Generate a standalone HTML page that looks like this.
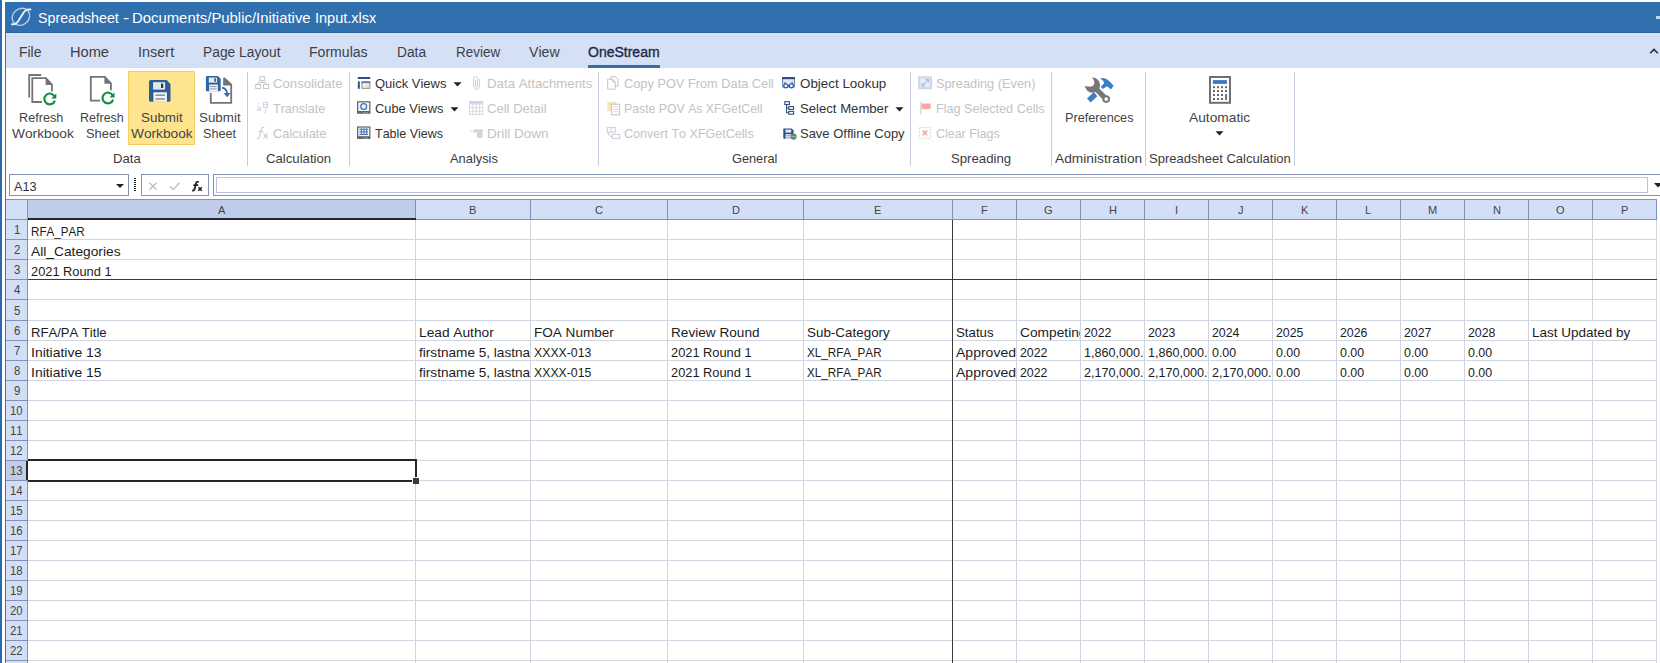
<!DOCTYPE html>
<html><head><meta charset="utf-8"><title>Spreadsheet</title>
<style>
html,body{margin:0;padding:0;background:#fff;}
body{width:1660px;height:663px;position:relative;overflow:hidden;font-family:"Liberation Sans",sans-serif;font-kerning:none;}
body div,body svg{position:absolute;}
</style></head><body>
<div style="left:0px;top:0px;width:2px;height:663px;background:#2b6cb0;"></div>
<div style="left:5px;top:2px;width:1655px;height:31px;background:#3170ae;"></div>
<div style="left:5px;top:33px;width:1px;height:630px;background:#3b76b5;"></div>
<div style="left:6px;top:33px;width:1654px;height:35px;background:#d4e0f6;"></div>
<div style="left:5px;top:32px;width:1655px;height:1px;background:#2b629e;"></div>
<div style="left:6px;top:33px;width:1654px;height:1px;background:#cfe2fb;"></div>
<div style="left:6px;top:36px;width:1654px;height:2px;background:#d6ddf1;"></div>
<div style="left:37.60px;top:7.68px;font-size:14.5px;line-height:20px;color:#ffffff;white-space:pre;transform-origin:0 0;transform:scaleX(0.9826);">Spreadsheet</div>
<div style="left:123.00px;top:7.68px;font-size:14.5px;line-height:20px;color:#ffffff;white-space:pre;transform-origin:0 0;transform:scaleX(1.2840);">-</div>
<div style="left:131.80px;top:7.68px;font-size:14.5px;line-height:20px;color:#ffffff;white-space:pre;transform-origin:0 0;transform:scaleX(1.0260);">Documents/Public/Initiative</div>
<div style="left:315.20px;top:7.68px;font-size:14.5px;line-height:20px;color:#ffffff;white-space:pre;transform-origin:0 0;transform:scaleX(1.0008);">Input.xlsx</div>
<div style="left:1656px;top:16px;width:4px;height:3px;background:#bcd6f6;"></div>
<svg style="left:1649px;top:47px" width="10" height="8" viewBox="0 0 10 8"><path d="M1.2 6.2 L5 2.4 L8.8 6.2" fill="none" stroke="#2a2f3a" stroke-width="1.6"/></svg>
<div style="left:19.40px;top:42.15px;font-size:14px;line-height:20px;color:#3d3f44;white-space:pre;transform-origin:0 0;transform:scaleX(0.9930);">File</div>
<div style="left:69.70px;top:42.15px;font-size:14px;line-height:20px;color:#3d3f44;white-space:pre;transform-origin:0 0;transform:scaleX(1.0443);">Home</div>
<div style="left:137.50px;top:42.15px;font-size:14px;line-height:20px;color:#3d3f44;white-space:pre;transform-origin:0 0;transform:scaleX(1.0339);">Insert</div>
<div style="left:202.90px;top:42.15px;font-size:14px;line-height:20px;color:#3d3f44;white-space:pre;transform-origin:0 0;transform:scaleX(0.9858);">Page Layout</div>
<div style="left:309.40px;top:42.15px;font-size:14px;line-height:20px;color:#3d3f44;white-space:pre;transform-origin:0 0;transform:scaleX(1.0044);">Formulas</div>
<div style="left:397.10px;top:42.15px;font-size:14px;line-height:20px;color:#3d3f44;white-space:pre;transform-origin:0 0;transform:scaleX(0.9840);">Data</div>
<div style="left:455.80px;top:42.15px;font-size:14px;line-height:20px;color:#3d3f44;white-space:pre;transform-origin:0 0;transform:scaleX(0.9607);">Review</div>
<div style="left:528.70px;top:42.15px;font-size:14px;line-height:20px;color:#3d3f44;white-space:pre;transform-origin:0 0;transform:scaleX(1.0117);">View</div>
<div style="left:588.00px;top:42.25px;font-size:14px;line-height:20px;color:#1f2a44;white-space:pre;transform-origin:0 0;transform:scaleX(1.0002);-webkit-text-stroke:0.35px #1f2a44;">OneStream</div>
<div style="left:588px;top:65px;width:72px;height:3px;background:#346fa9;"></div>
<div style="left:128px;top:71px;width:67px;height:74px;background:#ffe48f;box-sizing:border-box;border:1px solid #f5cf62;"></div>
<div style="left:247px;top:72px;width:1px;height:94px;background:#c4cede;"></div>
<div style="left:349px;top:72px;width:1px;height:94px;background:#c4cede;"></div>
<div style="left:598px;top:72px;width:1px;height:94px;background:#c4cede;"></div>
<div style="left:910px;top:72px;width:1px;height:94px;background:#c4cede;"></div>
<div style="left:1051px;top:72px;width:1px;height:94px;background:#c4cede;"></div>
<div style="left:1145px;top:72px;width:1px;height:94px;background:#c4cede;"></div>
<div style="left:1294px;top:72px;width:1px;height:94px;background:#c4cede;"></div>
<div style="left:19.20px;top:108.18px;font-size:13.33px;line-height:20px;color:#444444;white-space:pre;transform-origin:0 0;transform:scaleX(0.9491);">Refresh</div>
<div style="left:11.70px;top:124.18px;font-size:13.33px;line-height:20px;color:#444444;white-space:pre;transform-origin:0 0;transform:scaleX(1.0299);">Workbook</div>
<div style="left:79.80px;top:108.18px;font-size:13.33px;line-height:20px;color:#444444;white-space:pre;transform-origin:0 0;transform:scaleX(0.9384);">Refresh</div>
<div style="left:85.90px;top:124.18px;font-size:13.33px;line-height:20px;color:#444444;white-space:pre;transform-origin:0 0;transform:scaleX(0.9674);">Sheet</div>
<div style="left:140.80px;top:108.18px;font-size:13.33px;line-height:20px;color:#444444;white-space:pre;transform-origin:0 0;transform:scaleX(1.0051);">Submit</div>
<div style="left:130.90px;top:124.18px;font-size:13.33px;line-height:20px;color:#444444;white-space:pre;transform-origin:0 0;transform:scaleX(1.0283);">Workbook</div>
<div style="left:198.90px;top:108.18px;font-size:13.33px;line-height:20px;color:#444444;white-space:pre;transform-origin:0 0;transform:scaleX(1.0027);">Submit</div>
<div style="left:203.00px;top:124.18px;font-size:13.33px;line-height:20px;color:#444444;white-space:pre;transform-origin:0 0;transform:scaleX(0.9502);">Sheet</div>
<div style="left:1064.70px;top:108.18px;font-size:13.33px;line-height:20px;color:#444444;white-space:pre;transform-origin:0 0;transform:scaleX(0.9531);">Preferences</div>
<div style="left:1188.70px;top:108.18px;font-size:13.33px;line-height:20px;color:#444444;white-space:pre;transform-origin:0 0;transform:scaleX(1.0326);">Automatic</div>
<svg style="left:1215px;top:131px" width="9" height="5" viewBox="0 0 9 5"><path d="M0.5 0.3 H8.5 L4.5 4.5 Z" fill="#222"/></svg>
<div style="left:273.00px;top:74.18px;font-size:13.33px;line-height:20px;color:#c3c3c3;white-space:pre;transform-origin:0 0;transform:scaleX(0.9872);">Consolidate</div>
<div style="left:273.00px;top:99.18px;font-size:13.33px;line-height:20px;color:#c3c3c3;white-space:pre;transform-origin:0 0;transform:scaleX(0.9376);">Translate</div>
<div style="left:273.00px;top:124.18px;font-size:13.33px;line-height:20px;color:#c3c3c3;white-space:pre;transform-origin:0 0;transform:scaleX(0.9627);">Calculate</div>
<div style="left:374.80px;top:74.18px;font-size:13.33px;line-height:20px;color:#333333;white-space:pre;transform-origin:0 0;transform:scaleX(0.9736);">Quick Views</div>
<div style="left:374.80px;top:99.18px;font-size:13.33px;line-height:20px;color:#333333;white-space:pre;transform-origin:0 0;transform:scaleX(0.9616);">Cube Views</div>
<div style="left:374.80px;top:124.18px;font-size:13.33px;line-height:20px;color:#333333;white-space:pre;transform-origin:0 0;transform:scaleX(0.9379);">Table Views</div>
<div style="left:486.90px;top:74.18px;font-size:13.33px;line-height:20px;color:#c3c3c3;white-space:pre;transform-origin:0 0;transform:scaleX(0.9948);">Data Attachments</div>
<div style="left:486.90px;top:99.18px;font-size:13.33px;line-height:20px;color:#c3c3c3;white-space:pre;transform-origin:0 0;transform:scaleX(0.9811);">Cell Detail</div>
<div style="left:486.90px;top:124.18px;font-size:13.33px;line-height:20px;color:#c3c3c3;white-space:pre;transform-origin:0 0;transform:scaleX(1.0143);">Drill Down</div>
<div style="left:623.80px;top:74.18px;font-size:13.33px;line-height:20px;color:#c3c3c3;white-space:pre;transform-origin:0 0;transform:scaleX(0.9590);">Copy POV From Data Cell</div>
<div style="left:623.80px;top:99.18px;font-size:13.33px;line-height:20px;color:#c3c3c3;white-space:pre;transform-origin:0 0;transform:scaleX(0.9210);">Paste POV As XFGetCell</div>
<div style="left:623.80px;top:124.18px;font-size:13.33px;line-height:20px;color:#c3c3c3;white-space:pre;transform-origin:0 0;transform:scaleX(0.9413);">Convert To XFGetCells</div>
<div style="left:799.90px;top:74.18px;font-size:13.33px;line-height:20px;color:#333333;white-space:pre;transform-origin:0 0;transform:scaleX(1.0039);">Object Lookup</div>
<div style="left:799.90px;top:99.18px;font-size:13.33px;line-height:20px;color:#333333;white-space:pre;transform-origin:0 0;transform:scaleX(0.9851);">Select Member</div>
<div style="left:799.90px;top:124.18px;font-size:13.33px;line-height:20px;color:#333333;white-space:pre;transform-origin:0 0;transform:scaleX(0.9736);">Save Offline Copy</div>
<div style="left:935.80px;top:74.18px;font-size:13.33px;line-height:20px;color:#c3c3c3;white-space:pre;transform-origin:0 0;transform:scaleX(0.9582);">Spreading (Even)</div>
<div style="left:935.80px;top:99.18px;font-size:13.33px;line-height:20px;color:#c3c3c3;white-space:pre;transform-origin:0 0;transform:scaleX(0.9465);">Flag Selected Cells</div>
<div style="left:935.80px;top:124.18px;font-size:13.33px;line-height:20px;color:#c3c3c3;white-space:pre;transform-origin:0 0;transform:scaleX(0.9347);">Clear Flags</div>
<svg style="left:453px;top:82px" width="9" height="5" viewBox="0 0 9 5"><path d="M0.5 0.3 H8.5 L4.5 4.5 Z" fill="#222"/></svg>
<svg style="left:450px;top:107px" width="9" height="5" viewBox="0 0 9 5"><path d="M0.5 0.3 H8.5 L4.5 4.5 Z" fill="#222"/></svg>
<svg style="left:895px;top:107px" width="9" height="5" viewBox="0 0 9 5"><path d="M0.5 0.3 H8.5 L4.5 4.5 Z" fill="#222"/></svg>
<div style="left:112.60px;top:148.68px;font-size:13.33px;line-height:20px;color:#3c3c3c;white-space:pre;transform-origin:0 0;transform:scaleX(0.9838);">Data</div>
<div style="left:265.80px;top:148.68px;font-size:13.33px;line-height:20px;color:#3c3c3c;white-space:pre;transform-origin:0 0;transform:scaleX(0.9872);">Calculation</div>
<div style="left:449.60px;top:148.68px;font-size:13.33px;line-height:20px;color:#3c3c3c;white-space:pre;transform-origin:0 0;transform:scaleX(0.9650);">Analysis</div>
<div style="left:731.90px;top:148.68px;font-size:13.33px;line-height:20px;color:#3c3c3c;white-space:pre;transform-origin:0 0;transform:scaleX(0.9552);">General</div>
<div style="left:950.70px;top:148.68px;font-size:13.33px;line-height:20px;color:#3c3c3c;white-space:pre;transform-origin:0 0;transform:scaleX(0.9889);">Spreading</div>
<div style="left:1054.70px;top:148.68px;font-size:13.33px;line-height:20px;color:#3c3c3c;white-space:pre;transform-origin:0 0;transform:scaleX(1.0325);">Administration</div>
<div style="left:1148.70px;top:148.68px;font-size:13.33px;line-height:20px;color:#3c3c3c;white-space:pre;transform-origin:0 0;transform:scaleX(0.9763);">Spreadsheet Calculation</div>
<svg style="left:0;top:0" width="1660" height="172" viewBox="0 0 1660 172">
<!-- logo -->
<g fill="none" stroke-linecap="round">
<ellipse cx="20.9" cy="16.8" rx="9.3" ry="8" stroke="#b4d0ef" stroke-width="1.4" transform="rotate(-40 20.9 16.8)"/>
<path d="M30.4 9.5 C26 8.7 24.2 11.2 22.5 14.2 L19.3 19.6 C17.6 22.6 15.6 24.9 12 24.3" stroke="#e6f0fb" stroke-width="1.9"/>
</g>
<!-- Refresh Workbook -->
<g fill="none" stroke="#747474" stroke-width="1.8">
<path d="M41.2 75 H29.2 V97.5"/>
<path d="M51.9 91.5 V84.5 L46 78.2 H32.3 V102 H42"/>
</g>
<path d="M45.6 77.6 L52.6 84.9 H45.6 Z" fill="#747474"/>
<g fill="none" stroke="#0c8f3e" stroke-width="2.1">
<path d="M54.6 96.6 A5.4 5.4 0 1 0 54.9 100.6"/>
</g>
<path d="M56.3 93.4 V98.5 H51.2 Z" fill="#0c8f3e"/>
<!-- Refresh Sheet -->
<g fill="none" stroke="#747474" stroke-width="1.8">
<path d="M110.9 90.2 V83.4 L104.8 76.9 H90.8 V100.6 H100.2"/>
</g>
<path d="M104.4 76.3 L111.6 83.8 H104.4 Z" fill="#747474"/>
<g fill="none" stroke="#0c8f3e" stroke-width="2.1">
<path d="M112.8 95.6 A5.4 5.4 0 1 0 113.1 99.6"/>
</g>
<path d="M114.5 92.4 V97.5 H109.4 Z" fill="#0c8f3e"/>
<!-- Submit Workbook (floppy) -->
<path d="M150.6 80 H166.6 L170.5 83.9 V100.2 Q170.5 101.8 168.9 101.8 H150.6 Q149 101.8 149 100.2 V81.6 Q149 80 150.6 80 Z" fill="#2c5f96"/>
<rect x="153.1" y="82.2" width="12" height="7.4" fill="#e6e6ee"/>
<rect x="161" y="83.6" width="2.2" height="4.4" fill="#26384e"/>
<rect x="153.4" y="92.3" width="13.5" height="9.5" fill="#f4f6fa"/>
<rect x="155.4" y="94.4" width="9.6" height="1.5" fill="#8a8a8a"/>
<rect x="155.4" y="98.2" width="9.6" height="1.5" fill="#8a8a8a"/>
<!-- Submit Sheet -->
<g fill="none" stroke="#747474" stroke-width="1.8">
<path d="M210.8 93 V102.8 H231.2 V84.6 L224 78"/>
</g>
<path d="M223.2 77.4 L232 85.6 H223.2 Z" fill="#747474"/>
<path d="M207.2 76.1 H218 L220.7 78.8 V90 Q220.7 91.3 219.4 91.3 H207.2 Q205.9 91.3 205.9 90 V77.4 Q205.9 76.1 207.2 76.1 Z" fill="#2f68a6"/>
<rect x="208.8" y="77.6" width="8.2" height="5" fill="#e8ecf6"/>
<rect x="214.3" y="78.4" width="1.6" height="3.2" fill="#2c4a6e"/>
<rect x="209.2" y="84.6" width="8.6" height="6.7" fill="#f4f6fa"/>
<rect x="210.2" y="86" width="6.4" height="1.1" fill="#9a9a9a"/>
<rect x="210.2" y="88.4" width="6.4" height="1.1" fill="#9a9a9a"/>
<path d="M222 87.6 C225.2 88.2 227 90.4 227.2 94" fill="none" stroke="#2f6fb0" stroke-width="1.9"/>
<path d="M223.6 93 H230.6 L227.1 97.2 Z" fill="#2f6fb0"/>
<!-- Preferences -->
<g>
<path d="M1088.8 100.5 L1095.6 94.2" stroke="#3c7dc6" stroke-width="5.3" fill="none"/>
<path d="M1100.1 78.8 C1101.8 77.6 1103.8 77.8 1105.3 78.5 C1107 79.2 1108.4 80.2 1109.4 81.2 L1113.7 85.8 L1110.8 89.6 L1107.1 86.2 L1105.6 87.3 L1102.6 89 L1100.8 86.7 L1104 83.6 C1104 82.2 1103.6 81.4 1103 80.8 C1102.2 79.8 1101.2 79.2 1100.1 78.8 Z" fill="#3c7dc6"/>
<path d="M1093.5 86.2 L1106.2 99.1" stroke="#777" stroke-width="5.2" fill="none"/>
<circle cx="1106.2" cy="99.1" r="3.85" fill="#777"/>
<circle cx="1106.2" cy="99.1" r="1.85" fill="#fff"/>
<circle cx="1092.5" cy="85.1" r="7.6" fill="#777"/>
<circle cx="1090.2" cy="82.6" r="4.1" fill="#fff"/>
<path d="M1091.8 76.6 L1094.3 81.8 L1090.2 82.6 L1088.2 86.7 L1083.4 85.2 L1079 80 L1087 72 Z" fill="#fff"/>
</g>
<!-- Calculator -->
<rect x="1210" y="77" width="20" height="25.8" fill="#fff" stroke="#707070" stroke-width="2"/>
<rect x="1212.9" y="80.1" width="14" height="3.8" fill="#3b79c1"/>
<g fill="#666">
<rect x="1213" y="86.2" width="2" height="2"/><rect x="1217" y="86.2" width="2" height="2"/><rect x="1221" y="86.2" width="2" height="2"/><rect x="1225" y="86.2" width="2" height="2"/>
<rect x="1213" y="90.1" width="2" height="2"/><rect x="1217" y="90.1" width="2" height="2"/><rect x="1221" y="90.1" width="2" height="2"/><rect x="1225" y="90.1" width="2" height="2"/>
<rect x="1213" y="94" width="2" height="2"/><rect x="1217" y="94" width="2" height="2"/><rect x="1221" y="94" width="2" height="2"/>
<rect x="1213" y="98" width="2" height="2"/><rect x="1217" y="98" width="2" height="2"/><rect x="1221" y="98" width="2" height="2"/>
</g>
<rect x="1225" y="94" width="2" height="6" fill="#5b7fa6"/>

<!-- Consolidate (disabled) -->
<g fill="none" stroke="#c6c6c6" stroke-width="1">
<rect x="260" y="76.7" width="4.6" height="4"/>
<rect x="255.7" y="84.5" width="5" height="4"/>
<rect x="263.6" y="84.5" width="5" height="4"/>
<path d="M262.3 80.7 V82.6 M258.2 84.5 V82.6 H266.1 V84.5"/>
</g>
<!-- Translate (disabled) -->
<g fill="none" stroke-width="0.9">
<path d="M257 107 Q259 105.6 260.4 107 V110.6 M260.4 108.4 Q257 108.2 257 109.8 Q257.4 111.2 260.4 110" stroke="#dcc6d6"/>
<path d="M258 104.4 L259.4 103" stroke="#dcc6d6"/>
<path d="M263.2 102.4 H267.6 V107.2 H263.2 Z M263.2 104.8 H267.6 M266.6 107.2 L264.6 113" stroke="#c2cee6"/>
</g>
<!-- Calculate fx (disabled) -->
<g fill="none" stroke="#cacaca" stroke-width="1.1">
<path d="M256.8 138.4 C258.6 139 259.4 138 259.8 136 L261.2 129.6 C261.6 127.8 262.6 127 264.2 127.6 M258.6 131.6 H263.4"/>
<path d="M263.6 133.6 L267.6 138.4 M267.6 133.6 L263.6 138.4"/>
</g>
<!-- Quick Views -->
<rect x="357.8" y="77" width="12.4" height="2" fill="#2d4f86"/>
<rect x="357.8" y="81.4" width="2" height="7.4" fill="#2d4f86"/>
<rect x="362" y="81.9" width="7.8" height="6.4" fill="#fdf3e4" stroke="#8a8a8a" stroke-width="1"/>
<rect x="361.5" y="81.4" width="8.8" height="1.8" fill="#5a7fb8"/>
<rect x="365.6" y="85" width="3" height="2.6" fill="#f2d9b0"/>
<!-- Cube Views -->
<rect x="357.6" y="101.8" width="12.2" height="9.8" fill="#eef3fa" stroke="#646464" stroke-width="1.2"/>
<circle cx="363.7" cy="106.5" r="2.9" fill="none" stroke="#3f74b5" stroke-width="1.3"/>
<rect x="357" y="111.6" width="13.4" height="2.2" fill="#6a6a6a"/>
<rect x="363.6" y="112.3" width="1" height="1" fill="#ddd"/><rect x="366.4" y="112.3" width="1" height="1" fill="#ddd"/>
<!-- Table Views -->
<rect x="357.6" y="127" width="12.2" height="9.8" fill="#eef3fa" stroke="#646464" stroke-width="1.2"/>
<g stroke="#3f6fb5" stroke-width="1" fill="none">
<path d="M359.4 129.2 H368 M359.4 131.8 H368 M359.4 134.4 H368 M361.4 128.6 V134.6 M364 128.6 V134.6 M366.6 128.6 V134.6"/>
</g>
<rect x="357" y="136.8" width="13.4" height="2.2" fill="#6a6a6a"/>
<rect x="363.6" y="137.5" width="1" height="1" fill="#ddd"/><rect x="366.4" y="137.5" width="1" height="1" fill="#ddd"/>
<!-- Data Attachments paperclip (disabled) -->
<g fill="none" stroke="#cfcfcf" stroke-width="1">
<path d="M479.4 79 V86.4 A2.9 2.9 0 0 1 473.6 86.4 V78.8 A2 2 0 0 1 477.6 78.8 V86 A0.9 0.9 0 0 1 475.6 86 V80"/>
</g>
<!-- Cell Detail (disabled) -->
<rect x="469.4" y="101.4" width="13.4" height="2.4" fill="#c9d6ee"/>
<g fill="none" stroke="#d2d6de" stroke-width="0.9">
<rect x="469.4" y="101.6" width="13.4" height="13"/>
<path d="M469.4 104 H482.8 M469.4 107.6 H482.8 M469.4 111.2 H482.8 M472.8 104 V114.6 M476.2 104 V114.6 M479.6 104 V114.6"/>
</g>
<!-- Drill Down (disabled) -->
<g fill="#d2d2d2">
<rect x="470" y="130.6" width="2.6" height="1"/><rect x="473.4" y="129.4" width="9.4" height="3.2"/><rect x="477" y="132.6" width="5.4" height="5.2"/>
</g>
<!-- Copy POV (disabled) -->
<g fill="#fff" stroke="#c4c4c4" stroke-width="1">
<path d="M611 76.7 H615.6 L618 79.2 V86.2 H611 Z"/>
<path d="M607.7 79.2 H612.6 L615.2 81.8 V89.2 H607.7 Z"/>
<path d="M612.6 79.2 V81.8 H615.2" fill="none"/>
</g>
<!-- Paste POV (disabled) -->
<rect x="607.3" y="101.8" width="9.4" height="9.8" rx="1" fill="#f8e6b8"/>
<rect x="611.6" y="104.2" width="8" height="10.6" fill="#fff" stroke="#c4c4c4" stroke-width="1"/>
<path d="M613.2 107 H618 M613.2 109.4 H618 M613.2 111.8 H618" stroke="#d4cfe6" stroke-width="0.9" fill="none"/>
<!-- Convert (disabled) -->
<g fill="none" stroke="#c8ccd6" stroke-width="1">
<rect x="607.2" y="127.6" width="8" height="4.6"/><path d="M611.2 127.6 V132.2"/>
<rect x="612.2" y="134.4" width="7.4" height="4"/>
<path d="M608.4 132.6 C608.4 135.6 609.6 136.4 612 136.4" stroke="#b8c6e2"/>
</g>
<!-- Object Lookup -->
<rect x="782.6" y="77.9" width="11.8" height="9" fill="#dfe8f6" stroke="#5f7fb0" stroke-width="1"/>
<rect x="782.1" y="77" width="12.8" height="2.2" fill="#2d4f86"/>
<g fill="#fff" stroke="#2d5a96" stroke-width="1.2">
<circle cx="785.8" cy="85.8" r="2"/><circle cx="791.4" cy="85.8" r="2"/>
</g>
<path d="M787.8 85.4 H789.4 M784.2 84 L785.6 82 M793 84 L791.6 82" stroke="#2d5a96" stroke-width="1" fill="none"/>
<!-- Select Member -->
<g fill="#fff" stroke="#2f4e7c" stroke-width="1.1">
<rect x="784.8" y="101.7" width="4.6" height="2.8"/>
<rect x="788.8" y="106.6" width="4.8" height="2.8"/>
<rect x="788.8" y="111.4" width="4.8" height="2.8"/>
</g>
<path d="M786.6 104.5 V112.8 H788.8 M786.6 108 H788.8" stroke="#2f4e7c" stroke-width="1.1" fill="none"/>
<!-- Save Offline Copy -->
<path d="M784.2 128.4 H791.6 L793.6 130.4 V137.8 Q793.6 138.7 792.7 138.7 H784.2 Q783.3 138.7 783.3 137.8 V129.3 Q783.3 128.4 784.2 128.4 Z" fill="#2c5488"/>
<rect x="785.4" y="129.6" width="5.8" height="3" fill="#e4eaf4"/>
<rect x="785.6" y="134.2" width="6.2" height="4.5" fill="#f2f4f8"/>
<path d="M786.4 135.6 H791 M786.4 137.2 H791" stroke="#888" stroke-width="0.7"/>
<circle cx="793.6" cy="136.6" r="3.1" fill="#5c8a72"/>
<g fill="#dfe9e2"><rect x="791.6" y="136.2" width="0.9" height="0.9"/><rect x="793.2" y="136.2" width="0.9" height="0.9"/><rect x="794.8" y="136.2" width="0.9" height="0.9"/></g>
<!-- Spreading (Even) (disabled) -->
<rect x="918.1" y="76.3" width="14" height="13" fill="#cbd6ea"/>
<rect x="920.2" y="78.4" width="9.8" height="8.8" fill="#e6ecf7"/>
<path d="M922 86 L928.4 79.8 M925.4 79.6 H928.6 V82.8 M922 82.8 V86 H925.2" stroke="#b0bedb" stroke-width="1.1" fill="none"/>
<!-- Flag (disabled) -->
<rect x="920.3" y="101.6" width="1.1" height="12.8" fill="#cfcfcf"/>
<path d="M921.6 103.4 H930.8 V108.4 Q926 109.8 921.6 108.8 Z" fill="#f4aaa4"/>
<!-- Clear Flags (disabled) -->
<rect x="919.4" y="127.4" width="11" height="11" fill="none" stroke="#c9cfc6" stroke-width="1" stroke-dasharray="1.5 1.7"/>
<path d="M922.6 130.6 L927.2 135.2 M927.2 130.6 L922.6 135.2" stroke="#f1a39e" stroke-width="1.5" fill="none"/>
</svg>

<div style="left:9px;top:174px;width:120px;height:22px;background:#fff;box-sizing:border-box;border:1px solid #8591b5;"></div>
<div style="left:14.00px;top:177.06px;font-size:12.8px;line-height:20px;color:#333;white-space:pre;transform-origin:0 0;transform:scaleX(0.9923);">A13</div>
<svg style="left:116px;top:184px" width="8" height="4" viewBox="0 0 8 4"><path d="M0 0 H8 L4 4 Z" fill="#222"/></svg>
<div style="left:134px;top:178px;width:2px;height:1px;background:#222;"></div>
<div style="left:134px;top:180px;width:2px;height:1px;background:#222;"></div>
<div style="left:134px;top:182px;width:2px;height:1px;background:#222;"></div>
<div style="left:134px;top:184px;width:2px;height:1px;background:#222;"></div>
<div style="left:134px;top:186px;width:2px;height:1px;background:#222;"></div>
<div style="left:134px;top:188px;width:2px;height:1px;background:#222;"></div>
<div style="left:134px;top:190px;width:2px;height:1px;background:#222;"></div>
<div style="left:141px;top:174px;width:68px;height:22px;background:#fff;box-sizing:border-box;border:1px solid #8591b5;"></div>
<svg style="left:148px;top:181px" width="58" height="12" viewBox="0 0 58 12"><path d="M1.5 1.8 L8.5 8.8 M8.5 1.8 L1.5 8.8" stroke="#bcbcbc" stroke-width="1.3" fill="none"/><path d="M22.3 5.6 L25.3 8.6 L31.3 1.8" stroke="#bcbcbc" stroke-width="1.4" fill="none"/><path d="M44.2 9.6 C46 9.8 46.6 8.8 46.9 7 L47.8 2.6 C48.1 1.0 49.2 0.4 50.8 0.8 M45.4 4.1 H50.2" stroke="#222" stroke-width="1.75" fill="none"/><path d="M50.4 6.2 L53.8 9.8 M53.8 6.2 L50.4 9.8" stroke="#222" stroke-width="1.6" fill="none"/></svg>
<div style="left:213px;top:174px;width:1450px;height:22px;background:#fff;box-sizing:border-box;border:1px solid #8591b5;"></div>
<div style="left:216px;top:177px;width:1432px;height:16px;background:#fff;box-sizing:border-box;border:1px solid #b9c4dc;"></div>
<svg style="left:1654px;top:183px" width="8" height="5" viewBox="0 0 8 5"><path d="M0 0 H8 L4 4.4 Z" fill="#222"/></svg>
<div style="left:6px;top:199px;width:1651px;height:1px;background:#7f93bf;"></div>
<div style="left:6px;top:200px;width:1651px;height:20px;background:#d3dff6;"></div>
<div style="left:28px;top:200px;width:387px;height:20px;background:#bfcdea;"></div>
<div style="left:6px;top:220px;width:21px;height:443px;background:#d3dff6;"></div>
<div style="left:6px;top:461px;width:21px;height:19px;background:#bfcdea;"></div>
<div style="left:28px;top:239px;width:1629px;height:1px;background:#d0d5e2;"></div>
<div style="left:28px;top:259px;width:1629px;height:1px;background:#d0d5e2;"></div>
<div style="left:28px;top:279px;width:1629px;height:1px;background:#d0d5e2;"></div>
<div style="left:28px;top:299px;width:1629px;height:1px;background:#d0d5e2;"></div>
<div style="left:28px;top:320px;width:1629px;height:1px;background:#d0d5e2;"></div>
<div style="left:28px;top:340px;width:1629px;height:1px;background:#d0d5e2;"></div>
<div style="left:28px;top:360px;width:1629px;height:1px;background:#d0d5e2;"></div>
<div style="left:28px;top:380px;width:1629px;height:1px;background:#d0d5e2;"></div>
<div style="left:28px;top:400px;width:1629px;height:1px;background:#d0d5e2;"></div>
<div style="left:28px;top:420px;width:1629px;height:1px;background:#d0d5e2;"></div>
<div style="left:28px;top:440px;width:1629px;height:1px;background:#d0d5e2;"></div>
<div style="left:28px;top:460px;width:1629px;height:1px;background:#d0d5e2;"></div>
<div style="left:28px;top:480px;width:1629px;height:1px;background:#d0d5e2;"></div>
<div style="left:28px;top:500px;width:1629px;height:1px;background:#d0d5e2;"></div>
<div style="left:28px;top:520px;width:1629px;height:1px;background:#d0d5e2;"></div>
<div style="left:28px;top:540px;width:1629px;height:1px;background:#d0d5e2;"></div>
<div style="left:28px;top:560px;width:1629px;height:1px;background:#d0d5e2;"></div>
<div style="left:28px;top:580px;width:1629px;height:1px;background:#d0d5e2;"></div>
<div style="left:28px;top:600px;width:1629px;height:1px;background:#d0d5e2;"></div>
<div style="left:28px;top:620px;width:1629px;height:1px;background:#d0d5e2;"></div>
<div style="left:28px;top:640px;width:1629px;height:1px;background:#d0d5e2;"></div>
<div style="left:28px;top:660px;width:1629px;height:1px;background:#d0d5e2;"></div>
<div style="left:415px;top:220px;width:1px;height:443px;background:#d0d5e2;"></div>
<div style="left:530px;top:220px;width:1px;height:443px;background:#d0d5e2;"></div>
<div style="left:667px;top:220px;width:1px;height:443px;background:#d0d5e2;"></div>
<div style="left:803px;top:220px;width:1px;height:443px;background:#d0d5e2;"></div>
<div style="left:952px;top:220px;width:1px;height:443px;background:#d0d5e2;"></div>
<div style="left:1016px;top:220px;width:1px;height:443px;background:#d0d5e2;"></div>
<div style="left:1080px;top:220px;width:1px;height:443px;background:#d0d5e2;"></div>
<div style="left:1144px;top:220px;width:1px;height:443px;background:#d0d5e2;"></div>
<div style="left:1208px;top:220px;width:1px;height:443px;background:#d0d5e2;"></div>
<div style="left:1272px;top:220px;width:1px;height:443px;background:#d0d5e2;"></div>
<div style="left:1336px;top:220px;width:1px;height:443px;background:#d0d5e2;"></div>
<div style="left:1400px;top:220px;width:1px;height:443px;background:#d0d5e2;"></div>
<div style="left:1464px;top:220px;width:1px;height:443px;background:#d0d5e2;"></div>
<div style="left:1528px;top:220px;width:1px;height:443px;background:#d0d5e2;"></div>
<div style="left:1592px;top:220px;width:1px;height:443px;background:#d0d5e2;"></div>
<div style="left:1656px;top:220px;width:1px;height:443px;background:#d0d5e2;"></div>
<div style="left:1592px;top:321px;width:1px;height:19px;background:#fff;"></div>
<div style="left:6px;top:219px;width:1651px;height:1px;background:#8090b8;"></div>
<div style="left:27px;top:200px;width:1px;height:20px;background:#8090b8;"></div>
<div style="left:415px;top:200px;width:1px;height:20px;background:#8090b8;"></div>
<div style="left:530px;top:200px;width:1px;height:20px;background:#8090b8;"></div>
<div style="left:667px;top:200px;width:1px;height:20px;background:#8090b8;"></div>
<div style="left:803px;top:200px;width:1px;height:20px;background:#8090b8;"></div>
<div style="left:952px;top:200px;width:1px;height:20px;background:#8090b8;"></div>
<div style="left:1016px;top:200px;width:1px;height:20px;background:#8090b8;"></div>
<div style="left:1080px;top:200px;width:1px;height:20px;background:#8090b8;"></div>
<div style="left:1144px;top:200px;width:1px;height:20px;background:#8090b8;"></div>
<div style="left:1208px;top:200px;width:1px;height:20px;background:#8090b8;"></div>
<div style="left:1272px;top:200px;width:1px;height:20px;background:#8090b8;"></div>
<div style="left:1336px;top:200px;width:1px;height:20px;background:#8090b8;"></div>
<div style="left:1400px;top:200px;width:1px;height:20px;background:#8090b8;"></div>
<div style="left:1464px;top:200px;width:1px;height:20px;background:#8090b8;"></div>
<div style="left:1528px;top:200px;width:1px;height:20px;background:#8090b8;"></div>
<div style="left:1592px;top:200px;width:1px;height:20px;background:#8090b8;"></div>
<div style="left:1656px;top:200px;width:1px;height:20px;background:#8090b8;"></div>
<div style="left:27px;top:220px;width:1px;height:443px;background:#8090b8;"></div>
<div style="left:6px;top:239px;width:21px;height:1px;background:#8090b8;"></div>
<div style="left:6px;top:259px;width:21px;height:1px;background:#8090b8;"></div>
<div style="left:6px;top:279px;width:21px;height:1px;background:#8090b8;"></div>
<div style="left:6px;top:299px;width:21px;height:1px;background:#8090b8;"></div>
<div style="left:6px;top:320px;width:21px;height:1px;background:#8090b8;"></div>
<div style="left:6px;top:340px;width:21px;height:1px;background:#8090b8;"></div>
<div style="left:6px;top:360px;width:21px;height:1px;background:#8090b8;"></div>
<div style="left:6px;top:380px;width:21px;height:1px;background:#8090b8;"></div>
<div style="left:6px;top:400px;width:21px;height:1px;background:#8090b8;"></div>
<div style="left:6px;top:420px;width:21px;height:1px;background:#8090b8;"></div>
<div style="left:6px;top:440px;width:21px;height:1px;background:#8090b8;"></div>
<div style="left:6px;top:460px;width:21px;height:1px;background:#8090b8;"></div>
<div style="left:6px;top:480px;width:21px;height:1px;background:#8090b8;"></div>
<div style="left:6px;top:500px;width:21px;height:1px;background:#8090b8;"></div>
<div style="left:6px;top:520px;width:21px;height:1px;background:#8090b8;"></div>
<div style="left:6px;top:540px;width:21px;height:1px;background:#8090b8;"></div>
<div style="left:6px;top:560px;width:21px;height:1px;background:#8090b8;"></div>
<div style="left:6px;top:580px;width:21px;height:1px;background:#8090b8;"></div>
<div style="left:6px;top:600px;width:21px;height:1px;background:#8090b8;"></div>
<div style="left:6px;top:620px;width:21px;height:1px;background:#8090b8;"></div>
<div style="left:6px;top:640px;width:21px;height:1px;background:#8090b8;"></div>
<div style="left:6px;top:660px;width:21px;height:1px;background:#8090b8;"></div>
<div style="left:28px;top:218px;width:388px;height:2px;background:#242938;"></div>
<div style="left:28px;top:279px;width:1629px;height:1px;background:#3a3a3a;"></div>
<div style="left:952px;top:220px;width:1px;height:443px;background:#3a3a3a;"></div>
<div style="left:217.81px;top:200.15px;font-size:11.4px;line-height:20px;color:#444;white-space:pre;transform-origin:0 0;transform:scaleX(0.9700);">A</div>
<div style="left:469.31px;top:200.15px;font-size:11.4px;line-height:20px;color:#444;white-space:pre;transform-origin:0 0;transform:scaleX(0.9700);">B</div>
<div style="left:595.01px;top:200.15px;font-size:11.4px;line-height:20px;color:#444;white-space:pre;transform-origin:0 0;transform:scaleX(0.9700);">C</div>
<div style="left:731.51px;top:200.15px;font-size:11.4px;line-height:20px;color:#444;white-space:pre;transform-origin:0 0;transform:scaleX(0.9700);">D</div>
<div style="left:874.31px;top:200.15px;font-size:11.4px;line-height:20px;color:#444;white-space:pre;transform-origin:0 0;transform:scaleX(0.9700);">E</div>
<div style="left:981.12px;top:200.15px;font-size:11.4px;line-height:20px;color:#444;white-space:pre;transform-origin:0 0;transform:scaleX(0.9700);">F</div>
<div style="left:1044.20px;top:200.15px;font-size:11.4px;line-height:20px;color:#444;white-space:pre;transform-origin:0 0;transform:scaleX(0.9700);">G</div>
<div style="left:1108.51px;top:200.15px;font-size:11.4px;line-height:20px;color:#444;white-space:pre;transform-origin:0 0;transform:scaleX(0.9700);">H</div>
<div style="left:1174.96px;top:200.15px;font-size:11.4px;line-height:20px;color:#444;white-space:pre;transform-origin:0 0;transform:scaleX(0.9700);">I</div>
<div style="left:1237.74px;top:200.15px;font-size:11.4px;line-height:20px;color:#444;white-space:pre;transform-origin:0 0;transform:scaleX(0.9700);">J</div>
<div style="left:1300.81px;top:200.15px;font-size:11.4px;line-height:20px;color:#444;white-space:pre;transform-origin:0 0;transform:scaleX(0.9700);">K</div>
<div style="left:1365.43px;top:200.15px;font-size:11.4px;line-height:20px;color:#444;white-space:pre;transform-origin:0 0;transform:scaleX(0.9700);">L</div>
<div style="left:1427.89px;top:200.15px;font-size:11.4px;line-height:20px;color:#444;white-space:pre;transform-origin:0 0;transform:scaleX(0.9700);">M</div>
<div style="left:1492.51px;top:200.15px;font-size:11.4px;line-height:20px;color:#444;white-space:pre;transform-origin:0 0;transform:scaleX(0.9700);">N</div>
<div style="left:1556.20px;top:200.15px;font-size:11.4px;line-height:20px;color:#444;white-space:pre;transform-origin:0 0;transform:scaleX(0.9700);">O</div>
<div style="left:1620.81px;top:200.15px;font-size:11.4px;line-height:20px;color:#444;white-space:pre;transform-origin:0 0;transform:scaleX(0.9700);">P</div>
<div style="left:13.63px;top:219.84px;font-size:12px;line-height:20px;color:#444;white-space:pre;transform-origin:0 0;transform:scaleX(0.9500);">1</div>
<div style="left:13.63px;top:239.84px;font-size:12px;line-height:20px;color:#444;white-space:pre;transform-origin:0 0;transform:scaleX(0.9500);">2</div>
<div style="left:13.63px;top:259.84px;font-size:12px;line-height:20px;color:#444;white-space:pre;transform-origin:0 0;transform:scaleX(0.9500);">3</div>
<div style="left:13.63px;top:279.84px;font-size:12px;line-height:20px;color:#444;white-space:pre;transform-origin:0 0;transform:scaleX(0.9500);">4</div>
<div style="left:13.63px;top:300.84px;font-size:12px;line-height:20px;color:#444;white-space:pre;transform-origin:0 0;transform:scaleX(0.9500);">5</div>
<div style="left:13.63px;top:320.84px;font-size:12px;line-height:20px;color:#444;white-space:pre;transform-origin:0 0;transform:scaleX(0.9500);">6</div>
<div style="left:13.63px;top:340.84px;font-size:12px;line-height:20px;color:#444;white-space:pre;transform-origin:0 0;transform:scaleX(0.9500);">7</div>
<div style="left:13.63px;top:360.84px;font-size:12px;line-height:20px;color:#444;white-space:pre;transform-origin:0 0;transform:scaleX(0.9500);">8</div>
<div style="left:13.63px;top:380.84px;font-size:12px;line-height:20px;color:#444;white-space:pre;transform-origin:0 0;transform:scaleX(0.9500);">9</div>
<div style="left:10.46px;top:400.84px;font-size:12px;line-height:20px;color:#444;white-space:pre;transform-origin:0 0;transform:scaleX(0.9500);">10</div>
<div style="left:10.46px;top:420.84px;font-size:12px;line-height:20px;color:#444;white-space:pre;transform-origin:0 0;transform:scaleX(0.9500);">11</div>
<div style="left:10.46px;top:440.84px;font-size:12px;line-height:20px;color:#444;white-space:pre;transform-origin:0 0;transform:scaleX(0.9500);">12</div>
<div style="left:10.46px;top:460.84px;font-size:12px;line-height:20px;color:#444;white-space:pre;transform-origin:0 0;transform:scaleX(0.9500);">13</div>
<div style="left:10.46px;top:480.84px;font-size:12px;line-height:20px;color:#444;white-space:pre;transform-origin:0 0;transform:scaleX(0.9500);">14</div>
<div style="left:10.46px;top:500.84px;font-size:12px;line-height:20px;color:#444;white-space:pre;transform-origin:0 0;transform:scaleX(0.9500);">15</div>
<div style="left:10.46px;top:520.84px;font-size:12px;line-height:20px;color:#444;white-space:pre;transform-origin:0 0;transform:scaleX(0.9500);">16</div>
<div style="left:10.46px;top:540.84px;font-size:12px;line-height:20px;color:#444;white-space:pre;transform-origin:0 0;transform:scaleX(0.9500);">17</div>
<div style="left:10.46px;top:560.84px;font-size:12px;line-height:20px;color:#444;white-space:pre;transform-origin:0 0;transform:scaleX(0.9500);">18</div>
<div style="left:10.46px;top:580.84px;font-size:12px;line-height:20px;color:#444;white-space:pre;transform-origin:0 0;transform:scaleX(0.9500);">19</div>
<div style="left:10.46px;top:600.84px;font-size:12px;line-height:20px;color:#444;white-space:pre;transform-origin:0 0;transform:scaleX(0.9500);">20</div>
<div style="left:10.46px;top:620.84px;font-size:12px;line-height:20px;color:#444;white-space:pre;transform-origin:0 0;transform:scaleX(0.9500);">21</div>
<div style="left:10.46px;top:640.84px;font-size:12px;line-height:20px;color:#444;white-space:pre;transform-origin:0 0;transform:scaleX(0.9500);">22</div>
<div style="left:31.20px;top:222.13px;font-size:12.6px;line-height:20px;color:#1c1c1c;white-space:pre;transform-origin:0 0;transform:scaleX(0.9223);">RFA_PAR</div>
<div style="left:31.20px;top:242.13px;font-size:12.6px;line-height:20px;color:#1c1c1c;white-space:pre;transform-origin:0 0;transform:scaleX(1.0934);">All_Categories</div>
<div style="left:31.20px;top:262.13px;font-size:12.6px;line-height:20px;color:#1c1c1c;white-space:pre;transform-origin:0 0;transform:scaleX(1.0181);">2021 Round 1</div>
<div style="left:31.20px;top:323.13px;font-size:12.6px;line-height:20px;color:#1c1c1c;white-space:pre;transform-origin:0 0;transform:scaleX(1.0383);">RFA/PA Title</div>
<div style="left:31.20px;top:343.13px;font-size:12.6px;line-height:20px;color:#1c1c1c;white-space:pre;transform-origin:0 0;transform:scaleX(1.1077);">Initiative 13</div>
<div style="left:31.20px;top:363.13px;font-size:12.6px;line-height:20px;color:#1c1c1c;white-space:pre;transform-origin:0 0;transform:scaleX(1.1077);">Initiative 15</div>
<div style="left:419.20px;top:323.13px;font-size:12.6px;line-height:20px;color:#1c1c1c;white-space:pre;transform-origin:0 0;transform:scaleX(1.0895);">Lead Author</div>
<div style="left:419.20px;top:343.13px;width:110.40px;height:20px;overflow:hidden"><div style="left:0;top:0;font-size:12.6px;line-height:20px;color:#1c1c1c;white-space:pre;transform-origin:0 0;transform:scaleX(1.0802);">firstname 5, lastname 5</div></div>
<div style="left:419.20px;top:363.13px;width:110.40px;height:20px;overflow:hidden"><div style="left:0;top:0;font-size:12.6px;line-height:20px;color:#1c1c1c;white-space:pre;transform-origin:0 0;transform:scaleX(1.0802);">firstname 5, lastname 5</div></div>
<div style="left:534.20px;top:323.13px;font-size:12.6px;line-height:20px;color:#1c1c1c;white-space:pre;transform-origin:0 0;transform:scaleX(1.0752);">FOA Number</div>
<div style="left:534.20px;top:343.13px;font-size:12.6px;line-height:20px;color:#1c1c1c;white-space:pre;transform-origin:0 0;transform:scaleX(0.9756);">XXXX-013</div>
<div style="left:534.20px;top:363.13px;font-size:12.6px;line-height:20px;color:#1c1c1c;white-space:pre;transform-origin:0 0;transform:scaleX(0.9756);">XXXX-015</div>
<div style="left:671.20px;top:323.13px;font-size:12.6px;line-height:20px;color:#1c1c1c;white-space:pre;transform-origin:0 0;transform:scaleX(1.0812);">Review Round</div>
<div style="left:671.20px;top:343.13px;font-size:12.6px;line-height:20px;color:#1c1c1c;white-space:pre;transform-origin:0 0;transform:scaleX(1.0181);">2021 Round 1</div>
<div style="left:671.20px;top:363.13px;font-size:12.6px;line-height:20px;color:#1c1c1c;white-space:pre;transform-origin:0 0;transform:scaleX(1.0181);">2021 Round 1</div>
<div style="left:807.20px;top:323.13px;font-size:12.6px;line-height:20px;color:#1c1c1c;white-space:pre;transform-origin:0 0;transform:scaleX(1.0651);">Sub-Category</div>
<div style="left:807.20px;top:343.13px;font-size:12.6px;line-height:20px;color:#1c1c1c;white-space:pre;transform-origin:0 0;transform:scaleX(0.9263);">XL_RFA_PAR</div>
<div style="left:807.20px;top:363.13px;font-size:12.6px;line-height:20px;color:#1c1c1c;white-space:pre;transform-origin:0 0;transform:scaleX(0.9263);">XL_RFA_PAR</div>
<div style="left:956.20px;top:323.13px;font-size:12.6px;line-height:20px;color:#1c1c1c;white-space:pre;transform-origin:0 0;transform:scaleX(1.0526);">Status</div>
<div style="left:956.20px;top:343.13px;width:59.40px;height:20px;overflow:hidden"><div style="left:0;top:0;font-size:12.6px;line-height:20px;color:#1c1c1c;white-space:pre;transform-origin:0 0;transform:scaleX(1.1124);">Approved</div></div>
<div style="left:956.20px;top:363.13px;width:59.40px;height:20px;overflow:hidden"><div style="left:0;top:0;font-size:12.6px;line-height:20px;color:#1c1c1c;white-space:pre;transform-origin:0 0;transform:scaleX(1.1124);">Approved</div></div>
<div style="left:1020.20px;top:323.13px;width:59.40px;height:20px;overflow:hidden"><div style="left:0;top:0;font-size:12.6px;line-height:20px;color:#1c1c1c;white-space:pre;transform-origin:0 0;transform:scaleX(1.0923);">Competing Year</div></div>
<div style="left:1020.20px;top:343.13px;font-size:12.6px;line-height:20px;color:#1c1c1c;white-space:pre;transform-origin:0 0;transform:scaleX(0.9775);">2022</div>
<div style="left:1020.20px;top:363.13px;font-size:12.6px;line-height:20px;color:#1c1c1c;white-space:pre;transform-origin:0 0;transform:scaleX(0.9775);">2022</div>
<div style="left:1084.20px;top:323.13px;font-size:12.6px;line-height:20px;color:#1c1c1c;white-space:pre;transform-origin:0 0;transform:scaleX(0.9775);">2022</div>
<div style="left:1148.20px;top:323.13px;font-size:12.6px;line-height:20px;color:#1c1c1c;white-space:pre;transform-origin:0 0;transform:scaleX(0.9775);">2023</div>
<div style="left:1212.20px;top:323.13px;font-size:12.6px;line-height:20px;color:#1c1c1c;white-space:pre;transform-origin:0 0;transform:scaleX(0.9775);">2024</div>
<div style="left:1276.20px;top:323.13px;font-size:12.6px;line-height:20px;color:#1c1c1c;white-space:pre;transform-origin:0 0;transform:scaleX(0.9775);">2025</div>
<div style="left:1340.20px;top:323.13px;font-size:12.6px;line-height:20px;color:#1c1c1c;white-space:pre;transform-origin:0 0;transform:scaleX(0.9775);">2026</div>
<div style="left:1404.20px;top:323.13px;font-size:12.6px;line-height:20px;color:#1c1c1c;white-space:pre;transform-origin:0 0;transform:scaleX(0.9775);">2027</div>
<div style="left:1468.20px;top:323.13px;font-size:12.6px;line-height:20px;color:#1c1c1c;white-space:pre;transform-origin:0 0;transform:scaleX(0.9775);">2028</div>
<div style="left:1084.20px;top:343.13px;width:59.40px;height:20px;overflow:hidden"><div style="left:0;top:0;font-size:12.6px;line-height:20px;color:#1c1c1c;white-space:pre;transform-origin:0 0;transform:scaleX(1.0008);">1,860,000.00</div></div>
<div style="left:1084.20px;top:363.13px;width:59.40px;height:20px;overflow:hidden"><div style="left:0;top:0;font-size:12.6px;line-height:20px;color:#1c1c1c;white-space:pre;transform-origin:0 0;transform:scaleX(1.0008);">2,170,000.00</div></div>
<div style="left:1148.20px;top:343.13px;width:59.40px;height:20px;overflow:hidden"><div style="left:0;top:0;font-size:12.6px;line-height:20px;color:#1c1c1c;white-space:pre;transform-origin:0 0;transform:scaleX(1.0008);">1,860,000.00</div></div>
<div style="left:1148.20px;top:363.13px;width:59.40px;height:20px;overflow:hidden"><div style="left:0;top:0;font-size:12.6px;line-height:20px;color:#1c1c1c;white-space:pre;transform-origin:0 0;transform:scaleX(1.0008);">2,170,000.00</div></div>
<div style="left:1212.20px;top:343.13px;font-size:12.6px;line-height:20px;color:#1c1c1c;white-space:pre;transform-origin:0 0;transform:scaleX(0.9868);">0.00</div>
<div style="left:1212.20px;top:363.13px;width:59.40px;height:20px;overflow:hidden"><div style="left:0;top:0;font-size:12.6px;line-height:20px;color:#1c1c1c;white-space:pre;transform-origin:0 0;transform:scaleX(1.0008);">2,170,000.00</div></div>
<div style="left:1276.20px;top:343.13px;font-size:12.6px;line-height:20px;color:#1c1c1c;white-space:pre;transform-origin:0 0;transform:scaleX(0.9868);">0.00</div>
<div style="left:1276.20px;top:363.13px;font-size:12.6px;line-height:20px;color:#1c1c1c;white-space:pre;transform-origin:0 0;transform:scaleX(0.9868);">0.00</div>
<div style="left:1340.20px;top:343.13px;font-size:12.6px;line-height:20px;color:#1c1c1c;white-space:pre;transform-origin:0 0;transform:scaleX(0.9868);">0.00</div>
<div style="left:1340.20px;top:363.13px;font-size:12.6px;line-height:20px;color:#1c1c1c;white-space:pre;transform-origin:0 0;transform:scaleX(0.9868);">0.00</div>
<div style="left:1404.20px;top:343.13px;font-size:12.6px;line-height:20px;color:#1c1c1c;white-space:pre;transform-origin:0 0;transform:scaleX(0.9868);">0.00</div>
<div style="left:1404.20px;top:363.13px;font-size:12.6px;line-height:20px;color:#1c1c1c;white-space:pre;transform-origin:0 0;transform:scaleX(0.9868);">0.00</div>
<div style="left:1468.20px;top:343.13px;font-size:12.6px;line-height:20px;color:#1c1c1c;white-space:pre;transform-origin:0 0;transform:scaleX(0.9868);">0.00</div>
<div style="left:1468.20px;top:363.13px;font-size:12.6px;line-height:20px;color:#1c1c1c;white-space:pre;transform-origin:0 0;transform:scaleX(0.9868);">0.00</div>
<div style="left:1532.20px;top:323.13px;font-size:12.6px;line-height:20px;color:#1c1c1c;white-space:pre;transform-origin:0 0;transform:scaleX(1.0723);">Last Updated by</div>
<div style="left:28px;top:459px;width:389px;height:2px;background:#262626;"></div>
<div style="left:28px;top:480px;width:384px;height:2px;background:#262626;"></div>
<div style="left:26px;top:461px;width:2px;height:19px;background:#262626;"></div>
<div style="left:415px;top:459px;width:2px;height:18px;background:#262626;"></div>
<div style="left:413px;top:478px;width:6px;height:6px;background:#3a3a3a;"></div>
</body></html>
